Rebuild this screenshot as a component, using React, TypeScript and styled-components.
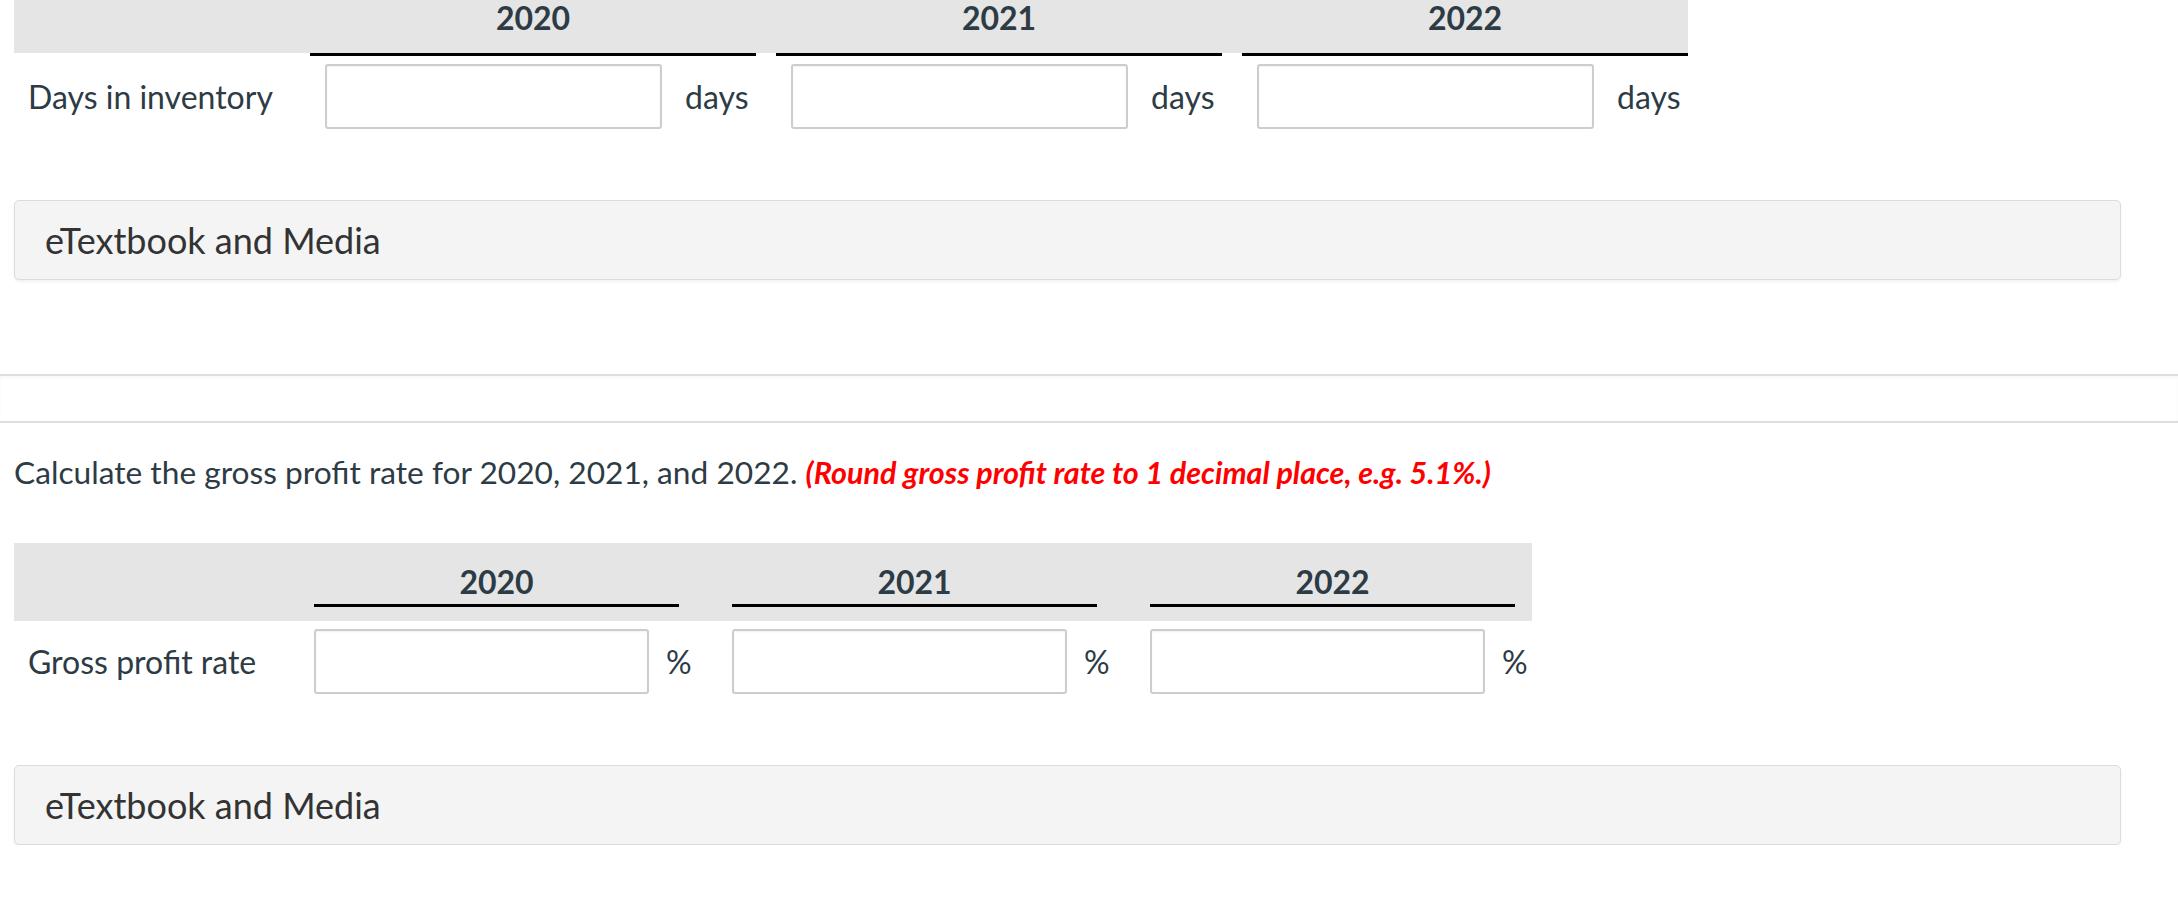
import React from "react";
import styled, { createGlobalStyle } from "styled-components";

const GlobalStyle = createGlobalStyle`
  html, body {
    margin: 0;
    padding: 0;
    background: #ffffff;
  }
  body {
    font-family: Lato, "Open Sans", "Liberation Sans", sans-serif;
    font-size: 32px;
    color: #2d3b45;
  }
`;

const Page = styled.div`
  width: 2178px;
  display: flex;
  flex-direction: column;
`;

const Section = styled.div`
  display: flex;
  flex-direction: column;
  padding: 0 57px 0 14px;
`;

interface GridProps {
  $label: number;
  $col: number;
  $gap: number;
  $right: number;
}

const HeaderBar = styled.div<GridProps & { $top: number; $bottom: number }>`
  display: grid;
  grid-template-columns: ${(p) => `${p.$label}px repeat(3, ${p.$col}px)`};
  column-gap: ${(p) => p.$gap}px;
  align-items: end;
  padding: ${(p) => `${p.$top}px ${p.$right}px ${p.$bottom}px 0`};
  width: fit-content;
  background: ${(p) =>
    p.$bottom > 0
      ? "#e5e5e5"
      : "linear-gradient(#e5e5e5, #e5e5e5) top left / 100% calc(100% - 3px) no-repeat"};
`;

const YearCell = styled.div<{ $under: number }>`
  text-align: center;
  font-weight: 700;
  line-height: 1.1;
  padding-bottom: ${(p) => p.$under}px;
  border-bottom: 3px solid #000000;
`;

const BodyRow = styled.div<GridProps>`
  display: grid;
  grid-template-columns: ${(p) => `${p.$label}px repeat(3, ${p.$col}px)`};
  column-gap: ${(p) => p.$gap}px;
  align-items: center;
  padding-top: 8px;
`;

const RowLabel = styled.div`
  padding-left: 14px;
  white-space: nowrap;
`;

const EntryCell = styled.div<{ $inset: number; $space: number }>`
  display: flex;
  align-items: center;
  gap: ${(p) => p.$space}px;
  padding-left: ${(p) => p.$inset}px;
  white-space: nowrap;
`;

const AnswerInput = styled.input<{ $w: number }>`
  box-sizing: border-box;
  width: ${(p) => p.$w}px;
  height: 65px;
  flex: none;
  border: 2px solid #cdcdcd;
  border-radius: 3px;
  background: #ffffff;
  box-shadow: inset 0 1px 2px rgba(0, 0, 0, 0.06);
  font: inherit;
  padding: 0 10px;
  outline: none;
`;

const Unit = styled.span`
  color: #2d3b45;
`;

const MediaBox = styled.div<{ $top: number }>`
  box-sizing: border-box;
  height: 80px;
  margin-top: ${(p) => p.$top}px;
  display: flex;
  align-items: center;
  padding-left: 30px;
  background: #f4f4f4;
  border: 1.5px solid #dcdcdc;
  border-radius: 5px;
  box-shadow: 0 2px 3px rgba(0, 0, 0, 0.06);
  color: #333333;
  font-size: 36px;
`;

const Divider = styled.div`
  margin-top: 94px;
  height: 45px;
  border-top: 2px solid #dedede;
  border-bottom: 2px solid #dedede;
  box-shadow: inset 0 2px 3px rgba(0, 0, 0, 0.03);
`;

const Prompt = styled.p`
  margin: 30px 0 51px;
  font-size: 31.7px;
  line-height: 1.21;
  white-space: nowrap;
`;

const Hint = styled.span`
  color: #ff0000;
  font-size: 30.5px;
  font-weight: 700;
  font-style: italic;
`;

const years = ["2020", "2021", "2022"];

const daysGrid = { $label: 276, $col: 446, $gap: 20, $right: 0 };
const rateGrid = { $label: 247, $col: 365, $gap: 53, $right: 17 };

const App: React.FC = () => {
  return (
    <Page>
      <GlobalStyle />
      <Section>
        <HeaderBar {...daysGrid} $top={0} $bottom={0}>
          <div />
          {years.map((y) => (
            <YearCell key={y} $under={18}>
              {y}
            </YearCell>
          ))}
        </HeaderBar>
        <BodyRow {...daysGrid}>
          <RowLabel>Days in inventory</RowLabel>
          {years.map((y) => (
            <EntryCell key={y} $inset={15} $space={23}>
              <AnswerInput $w={337} type="text" aria-label={`Days in inventory ${y}`} />
              <Unit>days</Unit>
            </EntryCell>
          ))}
        </BodyRow>
        <MediaBox $top={71}>eTextbook and Media</MediaBox>
      </Section>

      <Divider />

      <Section>
        <Prompt>
          Calculate the gross profit rate for 2020, 2021, and 2022.{" "}
          <Hint>(Round gross profit rate to 1 decimal place, e.g. 5.1%.)</Hint>
        </Prompt>
        <HeaderBar {...rateGrid} $top={21} $bottom={14}>
          <div />
          {years.map((y) => (
            <YearCell key={y} $under={5}>
              {y}
            </YearCell>
          ))}
        </HeaderBar>
        <BodyRow {...rateGrid}>
          <RowLabel>Gross profit rate</RowLabel>
          {years.map((y) => (
            <EntryCell key={y} $inset={0} $space={17}>
              <AnswerInput $w={335} type="text" aria-label={`Gross profit rate ${y}`} />
              <Unit>%</Unit>
            </EntryCell>
          ))}
        </BodyRow>
        <MediaBox $top={71}>eTextbook and Media</MediaBox>
      </Section>
    </Page>
  );
};

export default App;
